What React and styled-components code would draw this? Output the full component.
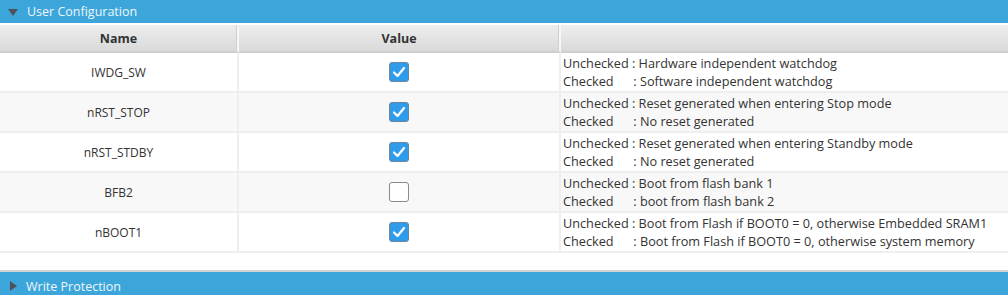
import React from 'react';
import styled, { createGlobalStyle } from 'styled-components';

const GlobalStyle = createGlobalStyle`
  html, body {
    margin: 0;
    padding: 0;
    background: #fff;
  }
  body {
    font-family: 'Open Sans', 'Noto Sans', 'Liberation Sans', sans-serif;
    font-size: 12px;
    color: #333;
  }
`;

const Page = styled.div`
  width: 1008px;
  height: 295px;
  overflow: hidden;
  display: flex;
  flex-direction: column;
`;

const SectionBar = styled.div`
  height: 23px;
  flex: none;
  display: flex;
  align-items: center;
  gap: 9px;
  padding-left: 8px;
  background: #3ca6da;
  color: #eef6fb;
  font-size: 12.5px;
  line-height: 17px;
`;

// the lower bar is cut by the window edge, so its text sits low
const BottomBar = styled(SectionBar)`
  margin-top: auto;
  height: 17px;
  padding-top: 6px;
  align-items: flex-start;
  border-top: 2px solid #d0d3d6;
`;

const Arrow = styled.span`
  width: 0;
  height: 0;
  ${(p) =>
    p.$open
      ? `border-left: 5px solid transparent;
         border-right: 5px solid transparent;
         border-top: 7px solid #4d5358;
         margin-top: 1px;`
      : `border-top: 5px solid transparent;
         border-bottom: 5px solid transparent;
         border-left: 7px solid #4d5358;
         margin-left: 2px;
         margin-top: 3px;`}
`;

const Table = styled.div`
  margin-top: 2px;
  display: grid;
  grid-template-columns: 239px 322px 1fr;
`;

const HeadCell = styled.div`
  height: 26px;
  display: flex;
  align-items: center;
  justify-content: center;
  font-weight: 700;
  font-size: 12.5px;
  color: #333;
  background: linear-gradient(#eeeeee, #d9d9d9);
  border-bottom: 2px solid #cfcfcf;
  border-right: ${(p) => (p.$last ? 'none' : '2px solid #f6f6f6')};
  box-shadow: ${(p) => (p.$last ? 'none' : 'inset -1px 0 0 #d0d0d0')};
`;

const Cell = styled.div`
  height: 38px;
  display: flex;
  align-items: center;
  justify-content: ${(p) => (p.$left ? 'flex-start' : 'center')};
  padding-left: ${(p) => (p.$left ? '2px' : '0')};
  background: ${(p) => (p.$alt ? '#f8f8f8' : '#fff')};
  border-bottom: 2px solid #efefef;
  border-right: ${(p) => (p.$last ? 'none' : '2px solid #efefef')};
  color: #333;
`;

const Desc = styled.div`
  display: flex;
  flex-direction: column;
  font-size: 12.7px;
  line-height: 18px;
  white-space: pre;
`;

const Box = styled.span`
  width: 20px;
  height: 20px;
  border-radius: 3px;
  box-sizing: border-box;
  display: flex;
  align-items: center;
  justify-content: center;
  background: ${(p) => (p.$checked ? '#2f9ceb' : '#fff')};
  border: 1px solid ${(p) => (p.$checked ? '#6e8496' : '#8a8a8a')};
`;

const Check = ({ checked }) => (
  <Box $checked={checked}>
    {checked && (
      <svg width="14" height="12" viewBox="0 0 14 12">
        <path d="M2 6.5 L5.5 10 L12 2" fill="none" stroke="#fff" strokeWidth="2.2" strokeLinecap="round" strokeLinejoin="round" />
      </svg>
    )}
  </Box>
);

const rows = [
  { name: 'IWDG_SW', checked: true, off: 'Hardware independent watchdog', on: 'Software independent watchdog' },
  { name: 'nRST_STOP', checked: true, off: 'Reset generated when entering Stop mode', on: 'No reset generated' },
  { name: 'nRST_STDBY', checked: true, off: 'Reset generated when entering Standby mode', on: 'No reset generated' },
  { name: 'BFB2', checked: false, off: 'Boot from flash bank 1', on: 'boot from flash bank 2' },
  { name: 'nBOOT1', checked: true, off: 'Boot from Flash if BOOT0 = 0, otherwise Embedded SRAM1', on: 'Boot from Flash if BOOT0 = 0, otherwise system memory' },
];

export default function App() {
  return (
    <>
      <GlobalStyle />
      <Page>
        <SectionBar>
          <Arrow $open />
          User Configuration
        </SectionBar>
        <Table>
          <HeadCell>Name</HeadCell>
          <HeadCell>Value</HeadCell>
          <HeadCell $last />
          {rows.map((r, i) => (
            <React.Fragment key={r.name}>
              <Cell $alt={i % 2 === 1}>{r.name}</Cell>
              <Cell $alt={i % 2 === 1}>
                <Check checked={r.checked} />
              </Cell>
              <Cell $alt={i % 2 === 1} $left $last>
                <Desc>
                  <span>{'Unchecked : ' + r.off}</span>
                  <span>{'Checked      : ' + r.on}</span>
                </Desc>
              </Cell>
            </React.Fragment>
          ))}
        </Table>
        <BottomBar>
          <Arrow />
          Write Protection
        </BottomBar>
      </Page>
    </>
  );
}
